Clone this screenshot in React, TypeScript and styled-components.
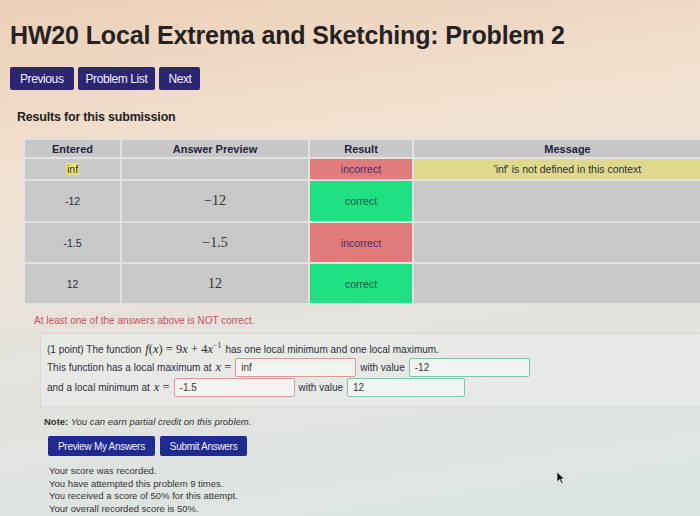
import styled, { createGlobalStyle } from "styled-components";

const GlobalStyle = createGlobalStyle`
  html, body {
    margin: 0;
    padding: 0;
    width: 700px;
    height: 516px;
    overflow: hidden;
  }
  body {
    font-family: "Liberation Sans", Arial, sans-serif;
    color: #2a2a2a;
    background: linear-gradient(172deg, #ebcfb8 0%, #f1e0cf 28%, #e4e2dc 58%, #dbe5e4 100%);
  }
`;

const Page = styled.div`
  width: 700px;
  height: 516px;
  padding-left: 10px;
  box-sizing: border-box;
  overflow: hidden;
`;

const Title = styled.h1`
  margin: 21px 0 0;
  font-size: 25px;
  line-height: 29px;
  font-weight: bold;
  color: #262222;
  letter-spacing: -0.15px;
`;

const Nav = styled.div`
  display: flex;
  gap: 4px;
  margin-top: 17px;
`;

const NavButton = styled.button<{ $pad?: number }>`
  height: 23px;
  padding: 0 ${(p) => p.$pad ?? 10}px;
  border: none;
  border-radius: 2px;
  background: #2b2572;
  color: #f2f0ff;
  font-family: "Liberation Sans", Arial, sans-serif;
  font-size: 12px;
  letter-spacing: -0.4px;
`;

const SubHead = styled.div`
  margin: 20px 0 0 7px;
  font-size: 12.5px;
  font-weight: bold;
  color: #222;
  letter-spacing: -0.2px;
`;

const ResultsTable = styled.table`
  margin: 14px 0 0 13px;
  width: 700px;
  border-collapse: collapse;
  table-layout: fixed;
  font-size: 10.5px;
  color: #2e2e3a;
`;

const Th = styled.th<{ $w?: number }>`
  width: ${(p) => (p.$w ? `${p.$w}px` : "auto")};
  height: 17px;
  padding: 0;
  background: #c7c7c7;
  border: 2px solid #e2e2e2;
  font-size: 11px;
  font-weight: bold;
  color: #24243a;
`;

const Td = styled.td<{ $h?: number; $kind?: "ok" | "bad" | "msg" }>`
  height: ${(p) => p.$h ?? 38}px;
  padding: 0;
  text-align: center;
  border: 2px solid #e2e2e2;
  background: ${(p) =>
    p.$kind === "ok" ? "#1fe184" : p.$kind === "bad" ? "#e07b7b" : p.$kind === "msg" ? "#ded98c" : "#c8c8c8"};
  color: ${(p) => (p.$kind === "ok" ? "#1f5a4a" : p.$kind === "bad" ? "#4a2a6a" : "#2e2e3a")};
`;

const Highlight = styled.span`
  background: #ece27a;
  padding: 0 1px;
`;

const MathCell = styled.span`
  font-family: "Liberation Serif", "Times New Roman", serif;
  font-size: 14px;
  color: #333;
`;

const Warning = styled.div`
  margin: 10px 0 0 24px;
  font-size: 10px;
  color: #c85060;
`;

const ProblemBox = styled.div`
  margin: 7px 0 0 30px;
  padding: 7px 0 9px 6px;
  background: rgba(236, 238, 236, 0.55);
  border: 1px solid #d4d8d6;
  border-right: none;
  font-size: 10px;
  color: #2e2e3a;
  display: flex;
  flex-direction: column;
`;

const Line = styled.div<{ $h?: number }>`
  display: flex;
  align-items: center;
  height: ${(p) => p.$h ?? 20}px;
  gap: 4px;
`;

const Math = styled.span`
  font-family: "Liberation Serif", "Times New Roman", serif;
  font-size: 12.5px;
  font-style: italic;
  color: #2a2a30;
`;

const Upright = styled.span`
  font-style: normal;
`;

const Sup = styled.sup`
  font-size: 8px;
  font-style: normal;
`;

const AnswerInput = styled.div<{ $w: number; $state: "ok" | "bad" }>`
  width: ${(p) => p.$w}px;
  height: 19px;
  box-sizing: border-box;
  padding: 0 5px;
  display: flex;
  align-items: center;
  background: #f2f4f2;
  border: 1px solid ${(p) => (p.$state === "ok" ? "#7fc4a4" : "#dc9898")};
  border-radius: 2px;
  font-size: 10px;
  color: #333;
`;

const Note = styled.div`
  margin: 9px 0 0 34px;
  font-size: 9.5px;
  font-style: italic;
  color: #333;
  b {
    font-style: normal;
  }
`;

const Actions = styled.div`
  display: flex;
  gap: 5px;
  margin: 9px 0 0 38px;
`;

const ActionButton = styled.button`
  height: 20px;
  padding: 0 10px;
  border: none;
  border-radius: 2px;
  background: #1f2b91;
  color: #eef0ff;
  font-family: "Liberation Sans", Arial, sans-serif;
  font-size: 10px;
  letter-spacing: -0.3px;
`;

const Score = styled.div`
  margin: 9px 0 0 39px;
  font-size: 9.5px;
  line-height: 12.7px;
  color: #333;
`;

const Cursor = styled.svg`
  position: absolute;
  left: 557px;
  top: 472px;
`;

const rows = [
  { entered: "inf", preview: "", ok: false, msg: "'inf' is not defined in this context", h: 20 },
  { entered: "-12", preview: "\u221212", ok: true, msg: "", h: 40 },
  { entered: "-1.5", preview: "\u22121.5", ok: false, msg: "", h: 39 },
  { entered: "12", preview: "12", ok: true, msg: "", h: 39 },
];

const App = () => {
  return (
    <Page>
      <GlobalStyle />
      <Title>HW20 Local Extrema and Sketching: Problem 2</Title>
      <Nav>
        <NavButton>Previous</NavButton>
        <NavButton $pad={8}>Problem List</NavButton>
        <NavButton $pad={9}>Next</NavButton>
      </Nav>
      <SubHead>Results for this submission</SubHead>
      <ResultsTable>
        <thead>
          <tr>
            <Th $w={95}>Entered</Th>
            <Th $w={186}>Answer Preview</Th>
            <Th $w={102}>Result</Th>
            <Th>Message</Th>
          </tr>
        </thead>
        <tbody>
          {rows.map((r, i) => (
            <tr key={i}>
              <Td $h={r.h}>{r.entered === "inf" ? <Highlight>inf</Highlight> : r.entered}</Td>
              <Td $h={r.h}>
                <MathCell>{r.preview}</MathCell>
              </Td>
              <Td $h={r.h} $kind={r.ok ? "ok" : "bad"}>
                {r.ok ? "correct" : "incorrect"}
              </Td>
              <Td $h={r.h} $kind={r.msg ? "msg" : undefined}>
                {r.msg}
              </Td>
            </tr>
          ))}
        </tbody>
      </ResultsTable>
      <Warning>At least one of the answers above is NOT correct.</Warning>
      <ProblemBox>
        <Line $h={16}>
          (1 point) The function
          <Math>
            f<Upright>(</Upright>x<Upright>) = 9</Upright>x<Upright> + 4</Upright>x<Sup>−1</Sup>
          </Math>
          has one local minimum and one local maximum.
        </Line>
        <Line>
          This function has a local maximum at <Math>x <Upright>=</Upright></Math>
          <AnswerInput $w={121} $state="bad">inf</AnswerInput>
          with value
          <AnswerInput $w={121} $state="ok">-12</AnswerInput>
        </Line>
        <Line>
          and a local minimum at <Math>x <Upright>=</Upright></Math>
          <AnswerInput $w={121} $state="bad">-1.5</AnswerInput>
          with value
          <AnswerInput $w={118} $state="ok">12</AnswerInput>
        </Line>
      </ProblemBox>
      <Note>
        <b>Note:</b> You can earn partial credit on this problem.
      </Note>
      <Actions>
        <ActionButton>Preview My Answers</ActionButton>
        <ActionButton>Submit Answers</ActionButton>
      </Actions>
      <Score>
        Your score was recorded.
        <br />
        You have attempted this problem 9 times.
        <br />
        You received a score of 50% for this attempt.
        <br />
        Your overall recorded score is 50%.
      </Score>
      <Cursor width="8" height="12" viewBox="0 0 8 12">
        <path d="M0 0 L0 10 L2.5 7.5 L4.5 11.5 L6 10.8 L4 7 L7.5 7 Z" fill="#111" stroke="#fff" strokeWidth="0.6" />
      </Cursor>
    </Page>
  );
};

export default App;
